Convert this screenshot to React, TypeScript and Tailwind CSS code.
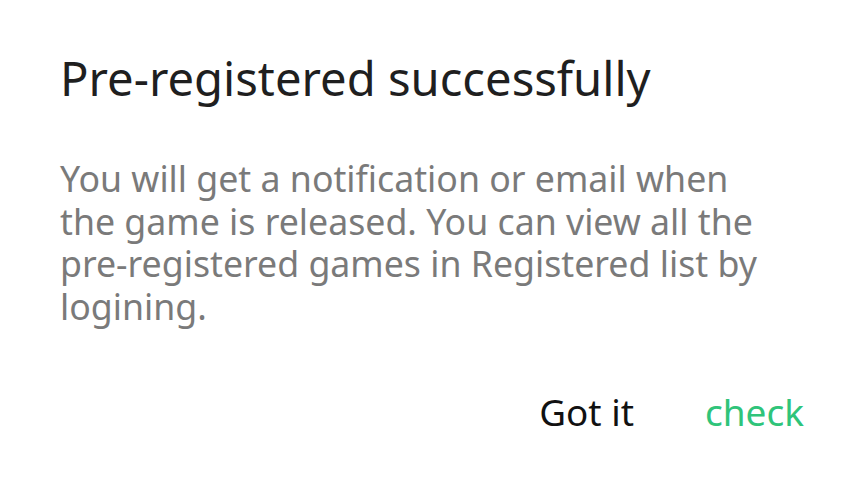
export default function App() {
  return (
    <div
      className="w-[868px] h-[488px] bg-white flex flex-col"
      style={{ fontFamily: '"Noto Sans", "Open Sans", sans-serif' }}
    >
      <div className="px-[60px] pt-[52px]">
        <h1 className="text-[47.2px] leading-[52px] text-[#1f1f1f] font-normal">
          Pre-registered successfully
        </h1>
        <p className="mt-[53px] w-[720px] text-[35.7px] leading-[42.5px] text-[#7a7a7a]">
          You will get a notification or email when the game is released. You can view all the
          pre-registered games in Registered list by logining.
        </p>
      </div>
      <div className="flex justify-end items-center gap-[71px] pr-[64px] mt-[63px]">
        <button className="text-[36.8px] leading-[44px] text-[#111]">Got it</button>
        <button className="text-[37px] leading-[44px] text-[#2fc47a]">check</button>
      </div>
    </div>
  );
}
